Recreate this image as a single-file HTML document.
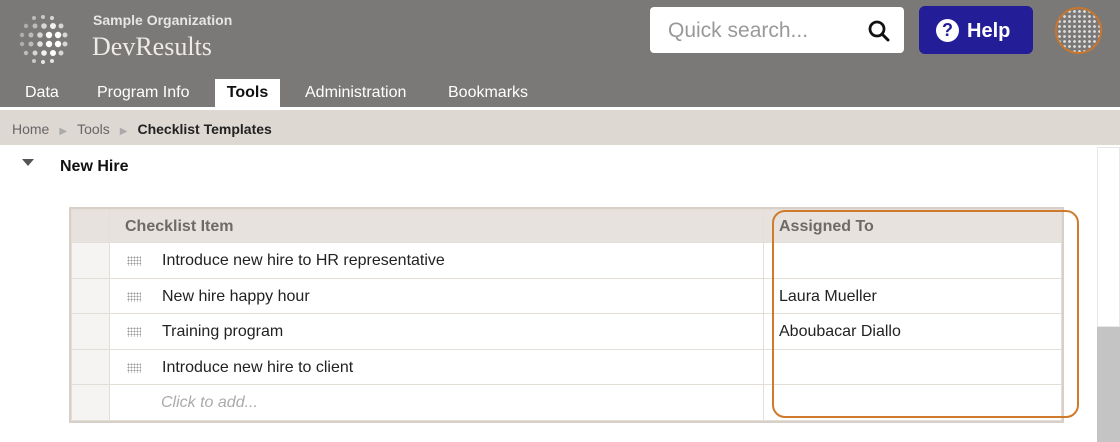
<!DOCTYPE html>
<html><head><style>
*{box-sizing:border-box;margin:0;padding:0}
body{width:1120px;height:442px;overflow:hidden;background:#fff;font-family:"Liberation Sans",sans-serif;position:relative}
.hdr{position:absolute;left:0;top:0;width:1120px;height:107px;background:#7b7977}
.abs{position:absolute}
.tab{position:absolute;top:79px;height:28px;line-height:28px;color:#fff;font-size:16px}
.crumb{position:absolute;left:0;top:110px;width:1120px;height:35px;background:#ded8d2;font-size:14px;color:#666;line-height:38px}
table{position:absolute;left:71px;top:209px;width:991px;border-collapse:collapse;font-size:16px;outline:2px solid #d8d0c8}
td,th{border:1px solid #e4ded8;height:35.5px;text-align:left;font-weight:normal;padding-left:15px;color:#222;padding-top:2px}
th{background:#e7e2dd;color:#6e6a66;font-weight:bold;height:33px}
td.g{background:#f6f4f2;width:38px;padding:0}
.drag{display:inline-block;width:14px;height:10px;margin-right:21px;margin-left:2px;vertical-align:middle;background-image:radial-gradient(circle,#999 0.8px,transparent 1px);background-size:3px 3px}
</style></head><body>
<div class="hdr"></div>
<svg class="abs" style="left:14px;top:10px" width="58" height="58" viewBox="0 0 58 58">
<g fill="#fff">
<circle cx="20" cy="8" r="2" opacity=".5"/><circle cx="29" cy="7" r="2" opacity=".6"/><circle cx="38" cy="8" r="2" opacity=".7"/>
<circle cx="12" cy="16" r="2.2" opacity=".4"/><circle cx="21" cy="16" r="2.5" opacity=".5"/><circle cx="30" cy="16" r="2.8" opacity=".7"/><circle cx="39" cy="16" r="3" opacity=".9"/><circle cx="47" cy="16" r="2.5" opacity=".7"/>
<circle cx="8" cy="25" r="2.2" opacity=".4"/><circle cx="17" cy="25" r="2.5" opacity=".5"/><circle cx="26" cy="25" r="2.8" opacity=".7"/><circle cx="35" cy="25" r="3.2"/><circle cx="44" cy="25" r="3.2"/><circle cx="51" cy="25" r="2.5" opacity=".7"/>
<circle cx="8" cy="34" r="2.2" opacity=".4"/><circle cx="17" cy="34" r="2.5" opacity=".5"/><circle cx="26" cy="34" r="2.8" opacity=".8"/><circle cx="35" cy="34" r="3.2"/><circle cx="44" cy="34" r="3.2"/><circle cx="51" cy="34" r="2.5" opacity=".7"/>
<circle cx="12" cy="43" r="2.2" opacity=".5"/><circle cx="21" cy="43" r="2.5" opacity=".7"/><circle cx="30" cy="43" r="2.8" opacity=".9"/><circle cx="39" cy="43" r="3"/><circle cx="47" cy="43" r="2.5" opacity=".7"/>
<circle cx="20" cy="51" r="2" opacity=".6"/><circle cx="29" cy="52" r="2" opacity=".8"/><circle cx="38" cy="51" r="2" opacity=".8"/>
</g></svg>
<div class="abs" style="left:93px;top:12px;color:#e8e6e4;font-weight:bold;font-size:14px">Sample Organization</div>
<div class="abs" style="left:92px;top:32px;color:#eeeae6;font-family:'Liberation Serif',serif;font-size:26px">DevResults</div>
<div class="abs" style="left:650px;top:7px;width:254px;height:46px;background:#fff;border-radius:4px"></div>
<div class="abs" style="left:668px;top:19px;color:#999;font-size:21px">Quick search...</div>
<svg class="abs" style="left:867px;top:19px" width="24" height="24" viewBox="0 0 24 24"><circle cx="10" cy="10" r="7" fill="none" stroke="#111" stroke-width="2.8"/><path d="M15 15l6 6" stroke="#111" stroke-width="3" stroke-linecap="round"/></svg>
<div class="abs" style="left:919px;top:6px;width:114px;height:48px;background:#231d97;border-radius:6px"></div>
<div class="abs" style="left:936px;top:19px;width:23px;height:23px;border-radius:50%;background:#fff;color:#231d97;font-weight:bold;font-size:18px;text-align:center;line-height:23px">?</div>
<div class="abs" style="left:967px;top:20px;color:#fff;font-weight:bold;font-size:20px">Help</div>
<div class="abs" style="left:1055px;top:7px;width:47px;height:47px;border-radius:50%;border:2px solid #c8762e;background:radial-gradient(circle,#ddd 1.2px,transparent 1.6px) 0 0/5px 5px;"></div>
<div class="tab" style="left:25px">Data</div>
<div class="tab" style="left:97px">Program Info</div>
<div class="tab" style="left:215px;width:65px;background:#fff;color:#111;font-weight:bold;text-align:center">Tools</div>
<div class="tab" style="left:305px">Administration</div>
<div class="tab" style="left:448px">Bookmarks</div>
<div class="crumb"><span style="margin-left:12px">Home</span><span style="color:#aaa;font-size:10px;margin:0 10px">▶</span>Tools<span style="color:#aaa;font-size:10px;margin:0 10px">▶</span><b style="color:#222">Checklist Templates</b></div>
<div class="abs" style="left:22px;top:159px;width:0;height:0;border-left:6px solid transparent;border-right:6px solid transparent;border-top:7px solid #555"></div>
<div class="abs" style="left:60px;top:158px;font-weight:bold;font-size:16px;color:#111">New Hire</div>
<div class="abs" style="left:1097px;top:147px;width:23px;height:180px;border:1px solid #e8e8e8;background:#fff"></div>
<div class="abs" style="left:1097px;top:327px;width:23px;height:115px;background:#c4c4c4"></div>
<table>
<tr><th class="g" style="padding:0;width:38px"></th><th style="width:654px">Checklist Item</th><th>Assigned To</th></tr>
<tr><td class="g"></td><td><span class="drag"></span>Introduce new hire to HR representative</td><td></td></tr>
<tr><td class="g"></td><td><span class="drag"></span>New hire happy hour</td><td>Laura Mueller</td></tr>
<tr><td class="g"></td><td><span class="drag"></span>Training program</td><td>Aboubacar Diallo</td></tr>
<tr><td class="g"></td><td><span class="drag"></span>Introduce new hire to client</td><td></td></tr>
<tr><td class="g"></td><td style="padding-left:51px;color:#aaa;font-style:italic">Click to add...</td><td></td></tr>
</table>
<div class="abs" style="left:772px;top:210px;width:307px;height:208px;border:2.5px solid #d07a2c;border-radius:13px"></div>
</body></html>
